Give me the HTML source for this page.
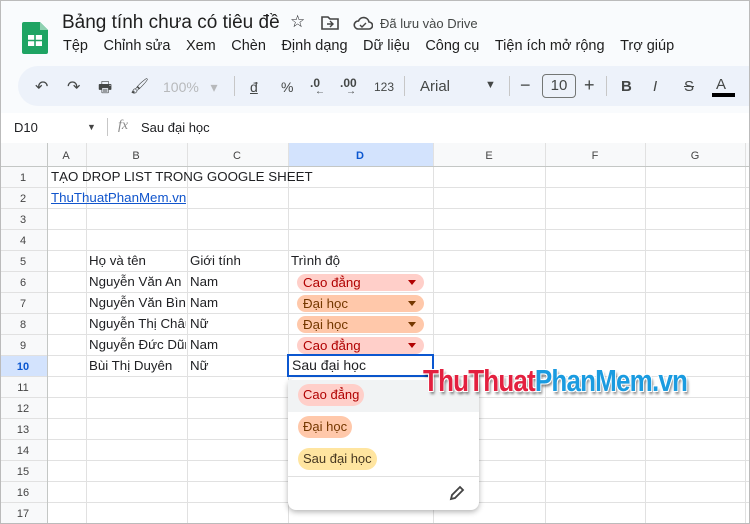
<!DOCTYPE html><html><head><meta charset="utf-8"><style>
*{margin:0;padding:0;box-sizing:border-box}
body{width:750px;height:524px;overflow:hidden;background:#f9fbfd;font-family:"Liberation Sans",Arial,sans-serif;position:relative;color:#202124}
.a{position:absolute;white-space:nowrap}
.menu span{margin-right:15.5px}
.tb{font-size:14px;color:#444746}
.cell{position:absolute;font-size:13.3px;line-height:21px;white-space:nowrap;overflow:hidden}
.chip{position:absolute;height:17px;border-radius:9px;font-size:13.3px;line-height:17px;padding-left:6px}
.chip i{position:absolute;right:8px;top:6px;border-left:4px solid transparent;border-right:4px solid transparent;border-top:5px solid}
</style></head><body>
<div class="a" style="left:0;top:0;width:750px;height:524px;border:1px solid #bbb;pointer-events:none;z-index:9"></div>
<svg class="a" style="left:22px;top:22px" width="26" height="32" viewBox="0 0 26 32"><path d="M2 0h16l8 8v22a2 2 0 0 1-2 2H2a2 2 0 0 1-2-2V2a2 2 0 0 1 2-2z" fill="#1fa463"/><path d="M18 0v8h8z" fill="#8ed1b1"/><rect x="6" y="13" width="14" height="11" fill="#fff"/><path d="M6 18.5h14M13 13v11" stroke="#1fa463" stroke-width="1.6"/></svg>
<div class="a" style="left:62px;top:12px;font-size:19px;color:#1f1f1f">Bảng tính chưa có tiêu đề</div>
<div class="a" style="left:290px;top:12px;font-size:17px">☆</div>
<svg class="a" style="left:321px;top:15px" width="18" height="15"><path d="M1 2h6l2 2h8v10H1z" fill="none" stroke="#444" stroke-width="1.6"/><path d="M6 9h6M9 6l3 3-3 3" stroke="#444" stroke-width="1.4" fill="none"/></svg>
<svg class="a" style="left:353px;top:16px" width="20" height="14"><path d="M5 13h11a3.5 3.5 0 0 0 0-7 5.5 5.5 0 0 0-10.5-1A4 4 0 0 0 5 13z" fill="none" stroke="#444" stroke-width="1.6"/><path d="M7 9l2 2 4-4" stroke="#444" stroke-width="1.4" fill="none"/></svg>
<div class="a" style="left:380px;top:16px;font-size:13px;color:#444746">Đã lưu vào Drive</div>
<div class="a menu" style="left:63px;top:38px;font-size:14.5px;color:#1f1f1f"><span>Tệp</span><span>Chỉnh sửa</span><span>Xem</span><span>Chèn</span><span>Định dạng</span><span>Dữ liệu</span><span>Công cụ</span><span>Tiện ích mở rộng</span><span>Trợ giúp</span></div>
<div class="a" style="left:18px;top:66px;width:760px;height:40px;background:#edf2fa;border-radius:20px"></div>
<div class="a tb" style="left:35px;top:77px;font-size:16px">↶</div>
<div class="a tb" style="left:67px;top:77px;font-size:16px">↷</div>
<div class="a tb" style="left:98px;top:77px;font-size:15px">🖶</div>
<div class="a tb" style="left:130px;top:77px;font-size:15px">🖌</div>
<div class="a tb" style="left:163px;top:79px;color:#b7b9bb">100%&nbsp;&nbsp;&nbsp;▾</div>
<div class="a" style="left:234px;top:76px;width:1px;height:20px;background:#c7c7c7"></div>
<div class="a tb" style="left:250px;top:79px;text-decoration:underline">đ</div>
<div class="a tb" style="left:281px;top:79px">%</div>
<div class="a tb" style="left:310px;top:76px;font-size:12px;font-weight:bold">.0</div>
<div class="a tb" style="left:315px;top:86px;font-size:10px">←</div>
<div class="a tb" style="left:340px;top:76px;font-size:12px;font-weight:bold">.00</div>
<div class="a tb" style="left:346px;top:86px;font-size:10px">→</div>
<div class="a tb" style="left:374px;top:80px;font-size:12px">123</div>
<div class="a" style="left:404px;top:76px;width:1px;height:20px;background:#c7c7c7"></div>
<div class="a tb" style="left:420px;top:78px;font-size:15px">Arial</div>
<div class="a tb" style="left:485px;top:79px;font-size:11px">▼</div>
<div class="a" style="left:509px;top:76px;width:1px;height:20px;background:#c7c7c7"></div>
<div class="a tb" style="left:520px;top:75px;font-size:18px">−</div>
<div class="a" style="left:542px;top:74px;width:34px;height:24px;border:1px solid #747775;border-radius:4px;font-size:15px;text-align:center;line-height:22px;color:#444746">10</div>
<div class="a tb" style="left:584px;top:75px;font-size:18px">+</div>
<div class="a" style="left:606px;top:76px;width:1px;height:20px;background:#c7c7c7"></div>
<div class="a tb" style="left:621px;top:78px;font-weight:bold;font-size:15px">B</div>
<div class="a tb" style="left:653px;top:78px;font-style:italic;font-size:15px">I</div>
<div class="a tb" style="left:684px;top:78px;text-decoration:line-through;font-size:15px">S</div>
<div class="a tb" style="left:716px;top:76px;font-size:15px">A</div>
<div class="a" style="left:712px;top:93px;width:23px;height:4px;background:#000"></div>
<div class="a" style="left:0;top:113px;width:750px;height:30px;background:#fff"></div>
<div class="a" style="left:14px;top:120px;font-size:13px">D10</div>
<div class="a" style="left:87px;top:122px;font-size:9px;color:#444">▼</div>
<div class="a" style="left:107px;top:118px;width:1px;height:18px;background:#c7c7c7"></div>
<div class="a" style="left:118px;top:118px;font-size:14px;font-style:italic;color:#888;font-family:'Liberation Serif',serif">fx</div>
<div class="a" style="left:141px;top:120px;font-size:13px">Sau đại học</div>
<svg class="a" style="left:0;top:143px" width="750" height="381">
<rect width="750" height="381" fill="#fff"/>
<rect width="750" height="23" fill="#f8f9fa"/><rect width="47" height="381" fill="#f8f9fa"/>
<rect x="288" width="145" height="23" fill="#d3e3fd"/><rect y="212" width="47" height="21" fill="#d3e3fd"/>
<g stroke="#e1e1e1" stroke-width="1">
<path d="M47.5 0V381M86.5 0V381M187.5 0V381M288.5 0V381M433.5 0V381M545.5 0V381M645.5 0V381M745.5 0V381"/>
<path d="M0 23.5H750M0 44.5H750M0 65.5H750M0 86.5H750M0 107.5H750M0 128.5H750M0 149.5H750M0 170.5H750M0 191.5H750M0 212.5H750M0 233.5H750M0 254.5H750M0 275.5H750M0 296.5H750M0 317.5H750M0 338.5H750M0 359.5H750M0 380.5H750"/>
</g>
<path d="M0 23.5H750M47.5 0V381" stroke="#c4c7c5"/>
<g font-family="Liberation Sans" font-size="11" fill="#444" text-anchor="middle">
<text x="66" y="16">A</text><text x="136" y="16">B</text><text x="237" y="16">C</text><text x="360" y="16" font-weight="bold" fill="#0b57d0">D</text><text x="489" y="16">E</text><text x="595" y="16">F</text><text x="695" y="16">G</text>
<text x="23" y="38">1</text><text x="23" y="59">2</text><text x="23" y="80">3</text><text x="23" y="101">4</text><text x="23" y="122">5</text><text x="23" y="143">6</text><text x="23" y="164">7</text><text x="23" y="185">8</text><text x="23" y="206">9</text><text x="23" y="227" font-weight="bold" fill="#0b57d0">10</text><text x="23" y="248">11</text><text x="23" y="269">12</text><text x="23" y="290">13</text><text x="23" y="311">14</text><text x="23" y="332">15</text><text x="23" y="353">16</text><text x="23" y="374">17</text>
</g></svg>
<div class="cell" style="left:51px;top:166px">TẠO DROP LIST TRONG GOOGLE SHEET</div>
<div class="cell" style="left:51px;top:187px;color:#1155cc;text-decoration:underline">ThuThuatPhanMem.vn</div>
<div class="cell" style="left:89px;top:250px">Họ và tên</div><div class="cell" style="left:190px;top:250px">Giới tính</div><div class="cell" style="left:291px;top:250px">Trình độ</div>
<div class="cell" style="left:89px;top:271px;width:97px">Nguyễn Văn An</div><div class="cell" style="left:190px;top:271px">Nam</div>
<div class="cell" style="left:89px;top:292px;width:97px">Nguyễn Văn Bình</div><div class="cell" style="left:190px;top:292px">Nam</div>
<div class="cell" style="left:89px;top:313px;width:97px">Nguyễn Thị Châu</div><div class="cell" style="left:190px;top:313px">Nữ</div>
<div class="cell" style="left:89px;top:334px;width:97px">Nguyễn Đức Dũng</div><div class="cell" style="left:190px;top:334px">Nam</div>
<div class="cell" style="left:89px;top:355px">Bùi Thị Duyên</div><div class="cell" style="left:190px;top:355px">Nữ</div>
<div class="chip" style="left:297px;top:274px;width:127px;background:#ffcfc9;color:#b10202">Cao đẳng<i></i></div>
<div class="chip" style="left:297px;top:295px;width:127px;background:#ffc8aa;color:#753800">Đại học<i></i></div>
<div class="chip" style="left:297px;top:316px;width:127px;background:#ffc8aa;color:#753800">Đại học<i></i></div>
<div class="chip" style="left:297px;top:337px;width:127px;background:#ffcfc9;color:#b10202">Cao đẳng<i></i></div>
<div class="a" style="left:287px;top:354px;width:147px;height:23px;border:2px solid #0b57d0;background:#fff;font-size:14px;line-height:19px;padding-left:3px">Sau đại học</div>
<div class="a" style="left:288px;top:378px;width:191px;height:132px;background:#fff;border-radius:8px;box-shadow:0 2px 6px rgba(0,0,0,.3)">
<div class="a" style="left:0;top:2px;width:191px;height:32px;background:#f1f3f4"></div>
<div class="a" style="left:10px;top:6px;height:22px;line-height:22px;padding:0 5px;border-radius:11px;background:#ffcfc9;color:#b10202;font-size:13px">Cao đẳng</div>
<div class="a" style="left:10px;top:38px;height:22px;line-height:22px;padding:0 5px;border-radius:11px;background:#ffc8aa;color:#753800;font-size:13px">Đại học</div>
<div class="a" style="left:10px;top:70px;height:22px;line-height:22px;padding:0 5px;border-radius:11px;background:#ffe5a0;color:#473821;font-size:13px">Sau đại học</div>
<div class="a" style="left:0;top:98px;width:191px;height:1px;background:#e0e0e0"></div>
<svg class="a" style="left:161px;top:107px" width="16" height="16"><path d="M2 14l1-4 8-8 3 3-8 8z" fill="none" stroke="#444" stroke-width="1.8"/></svg>
</div>
<div class="a" style="left:423px;top:363px;font-size:31px;font-weight:bold;letter-spacing:-1px;transform:scaleX(.84);transform-origin:left top;text-shadow:-1px -1px 0 #fff,1px -1px 0 #fff,-1px 1px 0 #fff,1px 1px 0 #fff,2px 3px 3px rgba(0,0,0,.5)"><span style="color:#e3203f">ThuThuat</span><span style="color:#1a9be0">PhanMem.vn</span></div>
</body></html>
